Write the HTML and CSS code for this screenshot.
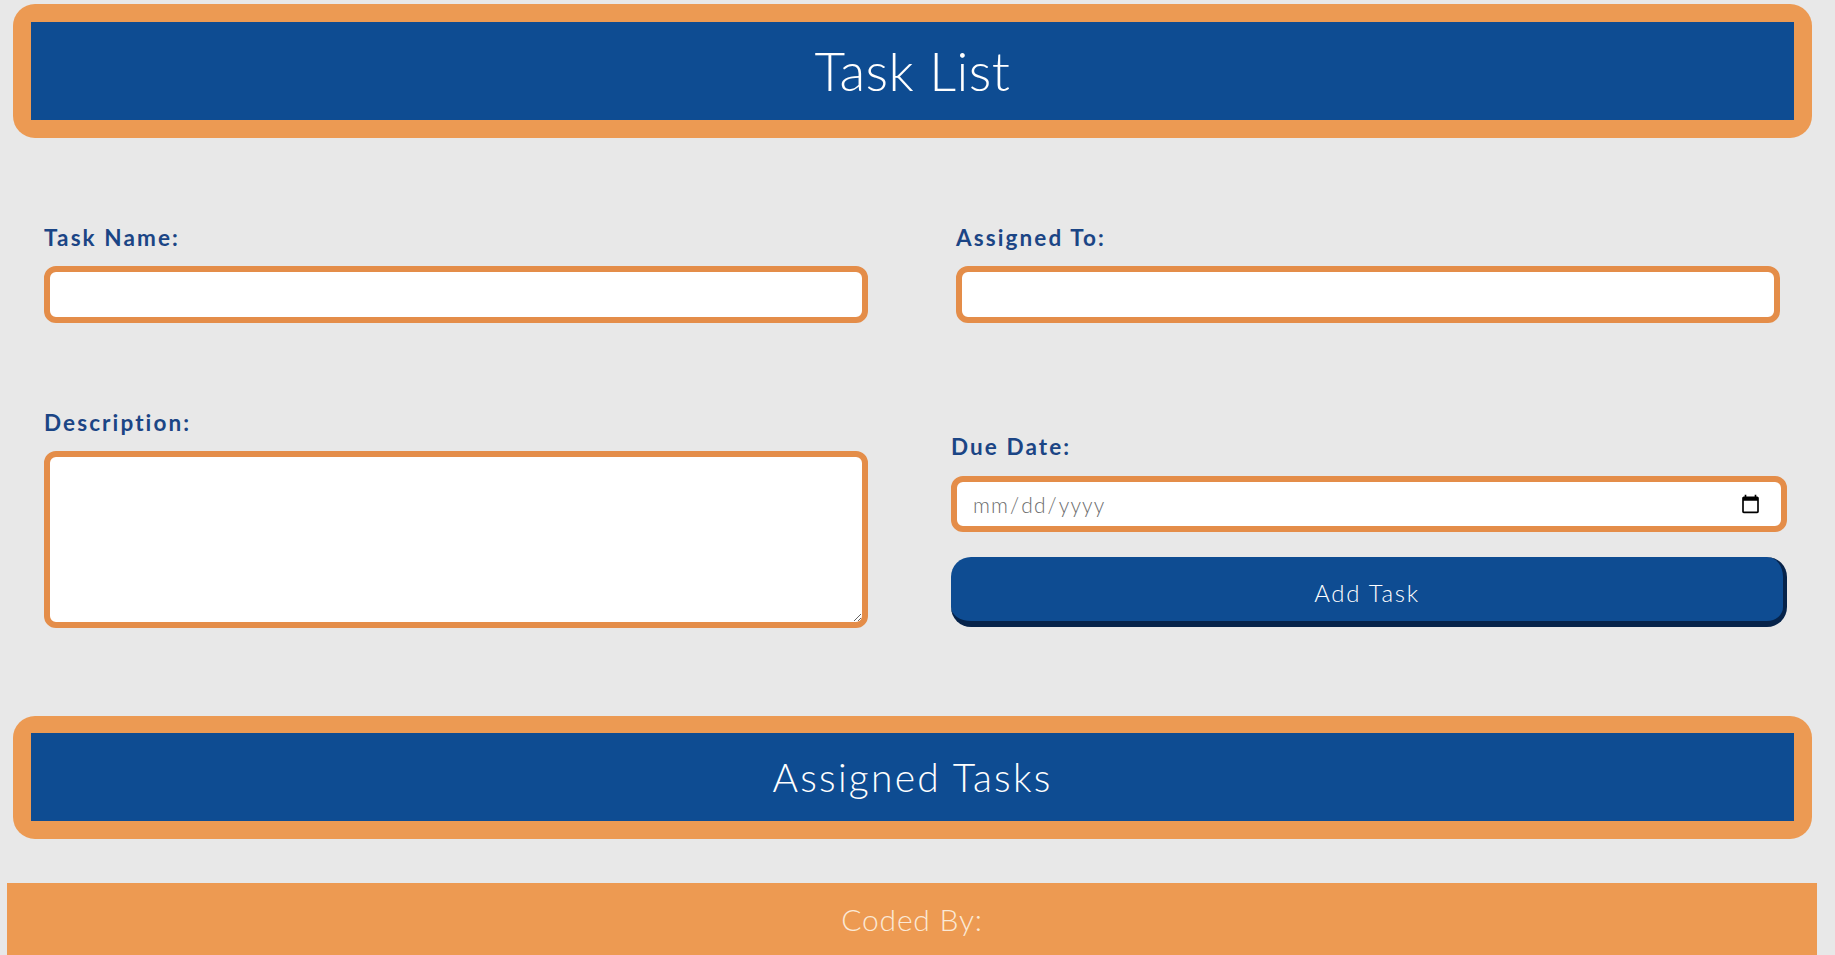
FILE: index.html
```html
<!DOCTYPE html>
<html lang="en">
<head>
<meta charset="utf-8">
<title>Task List</title>
<link rel="stylesheet" href="styles.css">
</head>
<body>
<header class="banner">
  <h1 class="banner-title">Task List</h1>
</header>

<form class="task-form">
  <div class="form-row">
    <div class="field">
      <label class="field-label" for="taskName">Task Name:</label>
      <input class="text-input" id="taskName" type="text">
    </div>
    <div class="field">
      <label class="field-label" for="assignedTo">Assigned To:</label>
      <input class="text-input" id="assignedTo" type="text">
    </div>
  </div>
  <div class="form-row form-row-second">
    <div class="field">
      <label class="field-label" for="description">Description:</label>
      <textarea class="text-area" id="description"></textarea>
    </div>
    <div class="field field-due">
      <label class="field-label" for="dueDate">Due Date:</label>
      <input class="date-input" id="dueDate" type="date">
      <button class="add-button" type="button">Add Task</button>
    </div>
  </div>
</form>

<section class="banner banner-small">
  <h2 class="banner-title banner-title-small">Assigned Tasks</h2>
</section>

<footer class="page-footer">Coded By:</footer>
</body>
</html>
```

FILE: styles.css
```css
html, body {
  background: #e8e8e8;
}

body {
  margin: 0 18px 0 7px;
  font-family: "Lato", "Open Sans", sans-serif;
  overflow: hidden;
}

.banner {
  margin: 4px 5px 0 6px;
  padding: 18px;
  background: #ec9a53;
  border-radius: 22px;
}

.banner-title {
  margin: 0;
  height: 98px;
  line-height: 98px;
  background: #0e4c92;
  color: #ffffff;
  text-align: center;
  font-weight: 300;
  font-size: 53px;
  letter-spacing: 0.5px;
}

.banner-small {
  margin-top: 88px;
  padding: 17px 18px 18px;
}

.banner-title-small {
  height: 88px;
  line-height: 88px;
  font-size: 39px;
  letter-spacing: 2.25px;
}

.task-form {
  padding-top: 87px;
  margin-left: 37px;
}

.form-row {
  display: flex;
  gap: 88px;
}

.form-row-second {
  margin-top: 87px;
  gap: 83px;
}

.field {
  width: 824px;
  display: flex;
  flex-direction: column;
}

.field-due {
  width: 836px;
  align-self: flex-end;
  margin-bottom: 1px;
}

.field-label {
  display: block;
  font-weight: 700;
  font-size: 22.5px;
  line-height: 26px;
  color: #1b4585;
  letter-spacing: 2.1px;
  margin-bottom: 15px;
}

.field-due .field-label {
  margin-bottom: 16px;
}

.text-input,
.text-area,
.date-input {
  box-sizing: border-box;
  display: block;
  width: 100%;
  border: 6px solid #e48d49;
  border-radius: 12px;
  background: #ffffff;
  outline: none;
  margin: 0;
}

.text-input {
  height: 57px;
}

.text-area {
  height: 177px;
  resize: both;
}

.date-input {
  height: 56px;
  padding: 0 18px 0 15px;
  font-family: "Lato", sans-serif;
  font-weight: 300;
  font-size: 21px;
  letter-spacing: 1.1px;
  color: #6d6d6d;
}

.add-button {
  box-sizing: border-box;
  margin-top: 25px;
  width: 100%;
  height: 70px;
  padding: 6px 0 0;
  border: none;
  border-right: 4px solid #06234a;
  border-bottom: 6px solid #06234a;
  border-radius: 20px;
  background: #0e4c92;
  color: #ffffff;
  font-family: "Lato", sans-serif;
  font-weight: 300;
  font-size: 24px;
  letter-spacing: 1.7px;
}

.page-footer {
  margin-top: 44px;
  padding: 18px 0 40px;
  background: #ed9a52;
  color: #fbe9d6;
  text-align: center;
  font-weight: 300;
  font-size: 30px;
  line-height: 36px;
  letter-spacing: 0.8px;
}
```
